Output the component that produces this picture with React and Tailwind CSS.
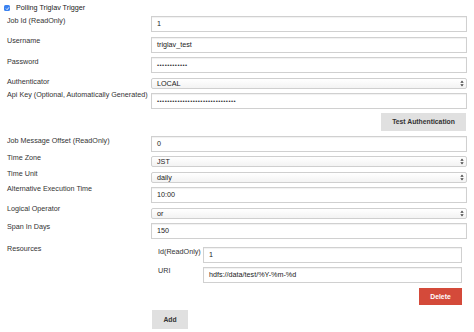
import React from 'react';

const font = "font-['Liberation_Sans',Arial,Helvetica,sans-serif]";

const Arrows = () => (
  <svg width="4" height="7" viewBox="0 0 4 7" className="shrink-0">
    <path d="M0.3 2.7 L2 0.6 L3.7 2.7 Z" fill="#444" />
    <path d="M0.3 4.3 L2 6.4 L3.7 4.3 Z" fill="#444" />
  </svg>
);

const TextBox = ({ value, className = '' }) => (
  <div
    className={`h-[16px] flex items-center pl-[5px] bg-white border border-[#d0d0d0] shadow-[inset_0_1px_1px_rgba(0,0,0,0.06)] text-[#222] whitespace-nowrap overflow-hidden ${className}`}
  >
    {value}
  </div>
);

const Dots = ({ n }) => (
  <span className="text-[6px] tracking-[0.45px] text-[#333]">{'•'.repeat(n)}</span>
);

const Select = ({ value }) => (
  <div className="h-[11px] flex items-center justify-between pl-[5px] pr-[2px] rounded-[2px] border border-[#cfcfcf] bg-gradient-to-b from-white to-[#f3f3f3] text-[#222]">
    <span>{value}</span>
    <Arrows />
  </div>
);

const Row = ({ label, mt, labelOffset = 0, children }) => (
  <div className="flex" style={{ marginTop: mt }}>
    <div className="w-[151px] shrink-0 pl-[7px] leading-[8px]" style={{ marginTop: labelOffset }}>
      {label}
    </div>
    <div className="flex-1 mr-[7px]">{children}</div>
  </div>
);

export default function App() {
  return (
    <div className={`w-[474px] h-[332px] bg-white overflow-hidden text-[7.2px] leading-[8px] text-[#333] ${font}`}>
      <div className="h-[16px] flex items-center pl-[4px]">
        <div className="w-[6px] h-[6px] rounded-[1.5px] bg-[#3b82f0] flex items-center justify-center">
          <svg width="5" height="5" viewBox="0 0 5 5">
            <path d="M1 2.6 L2.1 3.7 L4 1.3" fill="none" stroke="white" strokeWidth="0.9" />
          </svg>
        </div>
        <span className="ml-[6px] text-[#222]">Polling Triglav Trigger</span>
      </div>

      <Row label="Job Id (ReadOnly)" mt={0} labelOffset={1}>
        <TextBox value="1" />
      </Row>
      <Row label="Username" mt={5} labelOffset={0}>
        <TextBox value="triglav_test" />
      </Row>
      <Row label="Password" mt={4} labelOffset={1}>
        <TextBox value={<Dots n={12} />} />
      </Row>
      <Row label="Authenticator" mt={5} labelOffset={0}>
        <Select value="LOCAL" />
      </Row>
      <Row label="Api Key (Optional, Automatically Generated)" mt={4} labelOffset={-2}>
        <TextBox value={<Dots n={31} />} />
      </Row>
      <div className="flex justify-end mt-[4px] mr-[8px]">
        <button className="w-[85px] h-[18px] bg-[#e0e0e0] text-[6.8px] font-bold text-[#333] flex items-center justify-center">
          Test Authentication
        </button>
      </div>
      <Row label="Job Message Offset (ReadOnly)" mt={5} labelOffset={1}>
        <TextBox value="0" />
      </Row>
      <Row label="Time Zone" mt={4} labelOffset={-2}>
        <Select value="JST" />
      </Row>
      <Row label="Time Unit" mt={5} labelOffset={-2}>
        <Select value="daily" />
      </Row>
      <Row label="Alternative Execution Time" mt={4} labelOffset={-2}>
        <TextBox value="10:00" />
      </Row>
      <Row label="Logical Operator" mt={5} labelOffset={-3}>
        <Select value="or" />
      </Row>
      <Row label="Span In Days" mt={4} labelOffset={0}>
        <TextBox value="150" />
      </Row>

      <Row label="Resources" mt={8} labelOffset={-2}>
        <div className="mr-[5px]">
          <div className="flex">
            <div className="w-[52px] pl-[7px] shrink-0 mt-[1px]">Id(ReadOnly)</div>
            <TextBox value="1" className="flex-1" />
          </div>
          <div className="flex mt-[4px]">
            <div className="w-[52px] pl-[7px] shrink-0">URI</div>
            <TextBox value="hdfs://data/test/%Y-%m-%d" className="flex-1" />
          </div>
          <div className="flex justify-end mt-[5px]">
            <button className="w-[43px] h-[17px] bg-[#d44a3a] text-white text-[6.8px] font-bold flex items-center justify-center">
              Delete
            </button>
          </div>
        </div>
        <button className="mt-[5px] ml-[1px] w-[36px] h-[19px] bg-[#e0e0e0] text-[#333] text-[6.8px] font-bold flex items-center justify-center">
          Add
        </button>
      </Row>
    </div>
  );
}
